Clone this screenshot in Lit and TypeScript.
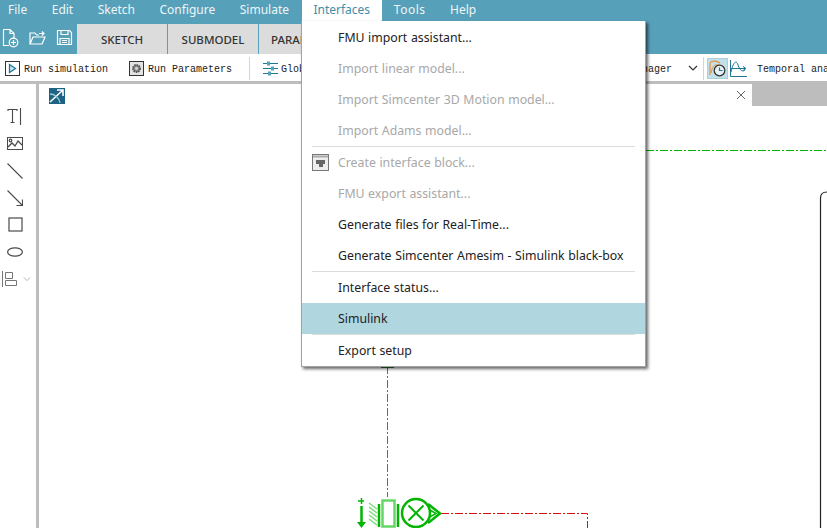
import { LitElement, html, css, svg } from "lit";
import { customElement } from "lit/decorators.js";

type Item = { t?: string; off?: boolean; hi?: boolean; sep?: boolean; icon?: boolean };

const ITEMS: Item[] = [
  { t: "FMU import assistant..." },
  { t: "Import linear model...", off: true },
  { t: "Import Simcenter 3D Motion model...", off: true },
  { t: "Import Adams model...", off: true },
  { sep: true },
  { t: "Create interface block...", off: true, icon: true },
  { t: "FMU export assistant...", off: true },
  { t: "Generate files for Real-Time..." },
  { t: "Generate Simcenter Amesim - Simulink black-box" },
  { sep: true },
  { t: "Interface status..." },
  { t: "Simulink", hi: true },
  { sep: true },
  { t: "Export setup" },
];

const MENUS = ["File", "Edit", "Sketch", "Configure", "Simulate", "Interfaces", "Tools", "Help"];

@customElement("app-root")
export class AppRoot extends LitElement {
  static styles = css`
    :host {
      display: block;
      position: relative;
      width: 827px;
      height: 528px;
      overflow: hidden;
      background: #fff;
      font-family: "Noto Sans", "Liberation Sans", sans-serif;
    }
    svg { display: block; flex: none; }
    .menubar {
      display: flex;
      height: 21px;
      background: #57a0b9;
    }
    .menubar span {
      padding: 0 12.25px;
      font-size: 12px;
      line-height: 20px;
      color: #eef6f8;
    }
    .menubar span:first-child { padding-left: 8px; }
    .menubar span:nth-child(7) { letter-spacing: 0.5px; }
    .menubar span.open {
      margin-left: 0.75px;
      padding: 0;
      width: 79.6px;
      box-sizing: border-box;
      text-align: center;
      background: #fff;
      color: #3f8ea8;
    }
    .tabrow {
      display: flex;
      height: 33px;
      background: #57a0b9;
      align-items: flex-end;
    }
    .quick {
      display: flex;
      width: 77px;
      height: 33px;
      align-items: center;
      gap: 10px;
      padding: 0 0 0 2px;
      box-sizing: border-box;
    }
    .tab {
      width: 90px;
      height: 30px;
      margin-right: 1px;
      background: #dcdcdc;
      color: #333;
      font-size: 11.5px;
      font-weight: 500;
      line-height: 31px;
      text-align: center;
      flex: none;
    }
    .tab.clipped { text-align: left; padding-left: 12px; width: 120px; box-sizing: border-box; }
    .toolbar {
      display: flex;
      height: 27px;
      padding-top: 1px;
      box-sizing: border-box;
      align-items: center;
      background: #fff;
      overflow: hidden;
      font-family: "Liberation Mono", "DejaVu Sans Mono", monospace;
      font-size: 10px;
      color: #222;
      white-space: nowrap;
    }
    .toolbar > * { flex: none; }
    .txt { padding-top: 2px; }
    .vsep { width: 1px; height: 23px; background: #d4d4d4; }
    .active {
      display: flex;
      width: 21px;
      height: 21px;
      align-items: center;
      justify-content: center;
      background: #c3dfe7;
      border: 1px solid #a9d0dc;
      box-sizing: border-box;
    }
    .work {
      display: flex;
      height: 447px;
      border-top: 3px solid #bdbdbd;
      box-sizing: border-box;
    }
    .rail {
      display: flex;
      flex-direction: column;
      align-items: flex-start;
      width: 36px;
      padding-top: 19px;
      box-sizing: border-box;
      flex: none;
    }
    .slot {
      display: flex;
      height: 27px;
      width: 30px;
      align-items: center;
      justify-content: center;
    }
    .slot.wide { width: 36px; justify-content: flex-start; gap: 6px; padding-left: 2px; box-sizing: border-box; }
    .canvas {
      position: relative;
      flex: 1;
      border-left: 3px solid #bdbdbd;
      overflow: hidden;
    }
    .doc-strip {
      display: flex;
      height: 22px;
    }
    .doc-tab {
      position: relative;
      width: 713px;
      display: flex;
      align-items: center;
      justify-content: flex-end;
      padding-right: 6px;
      box-sizing: border-box;
    }
    .doc-logo { margin-left: 10px; margin-right: auto; margin-top: 2px; }
    .doc-rest { flex: 1; background: #bdbdbd; }
    .diagram { position: absolute; left: 0; top: 0; }
    .menu {
      position: absolute;
      left: 301px;
      top: 21px;
      width: 345px;
      height: 346px;
      box-sizing: border-box;
      background: #fff;
      border: 1px solid #a2a2a2;
      border-top: 0;
      padding-top: 1px;
      box-shadow: 2px 2px 3px rgba(0, 0, 0, 0.6);
      font-size: 12.3px;
      word-spacing: 0.4px;
      color: #222;
    }
    .item {
      position: relative;
      display: flex;
      align-items: center;
      height: 31px;
      padding-left: 36px;
      white-space: nowrap;
    }
    .item.off { color: #a8a8a8; }
    .item.hi { background: #b0d6e0; }
    .item svg { position: absolute; left: 10px; top: 7px; }
    .sep {
      height: 1px;
      margin: 0 10px 0 10px;
      background: #dcdcdc;
    }
  `;

  private quick() {
    return html`
      <svg width="17" height="20" viewBox="0 0 17 20" fill="none" stroke="#fff" stroke-width="1.2">
        <path d="M1.5 1.500h6.500l4 4v5M8 1.500v4h4M7 17.500H1.500v-16" />
        <circle cx="11.500" cy="14.500" r="4.300" />
        <path d="M9 14.500h5M11.500 12v5" />
      </svg>
      <svg width="17" height="16" viewBox="0 0 17 16" fill="none" stroke="#fff" stroke-width="1.2">
        <path d="M1 14V3h5l1.500 2H10M1 14l3-7h12l-3 7z" />
        <path d="M10 3.500h5M13 1.500l2 2-2 2" />
      </svg>
      <svg width="17" height="17" viewBox="0 0 17 17" fill="none" stroke="#fff" stroke-width="1.2">
        <path d="M1.500 1.500h12l2 2v12h-14z" />
        <path d="M5 1.500v4h7v-4M4 15.500v-6h9v6M6 11.500h5M6 13.500h5" />
      </svg>
    `;
  }

  private playIcon() {
    return html`<svg width="15" height="15" viewBox="0 0 15 15" fill="none">
      <rect x="0.500" y="0.500" width="14" height="14" fill="#fff" stroke="#333" />
      <path d="M4.500 3.500l6 4-6 4z" fill="#cfe5ec" stroke="#1f7796" stroke-width="1.300" />
    </svg>`;
  }

  private gearIcon() {
    return html`<svg width="15" height="15" viewBox="0 0 15 15" fill="none">
      <rect x="0.500" y="0.500" width="14" height="14" fill="#e4e4e4" stroke="#333" />
      <circle cx="7.500" cy="7.500" r="3.500" fill="#8d8d8d" stroke="#555" stroke-width="2" stroke-dasharray="1.500 0.800" />
      <circle cx="7.500" cy="7.500" r="1.400" fill="#d8d8d8" />
    </svg>`;
  }

  private slidersIcon() {
    return html`<svg width="15" height="15" viewBox="0 0 15 15" fill="none" stroke="#1f7796">
      <path d="M0 2.500h15M0 7.500h15M0 12.500h15" />
      <rect x="4" y="0.500" width="3" height="4" fill="#57a0b9" stroke="none" />
      <rect x="8" y="5.500" width="3" height="4" fill="#57a0b9" stroke="none" />
      <rect x="5" y="10.500" width="3" height="4" fill="#57a0b9" stroke="none" />
    </svg>`;
  }

  private chevron(color: string, w = 10) {
    return html`<svg width=${w} height="6" viewBox="0 0 10 6" fill="none" stroke=${color} stroke-width="1.200">
      <path d="M1 1l4 4 4-4" />
    </svg>`;
  }

  private rail() {
    const s = "#4a4a4a";
    return html`
      <div class="slot"><svg width="16" height="17" viewBox="0 0 16 17" fill="none" stroke=${s} stroke-width="1.100">
        <path d="M1 3V1.500h9V3M5.500 1.500v13M3.500 14.500h4M13.500 0v17" />
      </svg></div>
      <div class="slot"><svg width="16" height="13" viewBox="0 0 16 13" fill="none" stroke=${s}>
        <rect x="0.500" y="0.500" width="15" height="12" />
        <circle cx="3.500" cy="3.500" r="1.300" stroke-width="1.200" />
        <path d="M1 10l4-4 3 3 3-5 4 4" stroke-width="1.300" />
      </svg></div>
      <div class="slot"><svg width="16" height="16" viewBox="0 0 16 16" fill="none" stroke=${s} stroke-width="1.100">
        <path d="M0.500 0.500l15 15" />
      </svg></div>
      <div class="slot"><svg width="16" height="16" viewBox="0 0 16 16" fill="none" stroke=${s} stroke-width="1.100">
        <path d="M0.500 0.500l15 15M15.500 9.500v6h-6" />
      </svg></div>
      <div class="slot"><svg width="15" height="15" viewBox="0 0 15 15" fill="none" stroke=${s} stroke-width="1.200">
        <rect x="1" y="1" width="13" height="13" />
      </svg></div>
      <div class="slot"><svg width="16" height="10" viewBox="0 0 16 10" fill="none" stroke=${s} stroke-width="1.200">
        <ellipse cx="8" cy="5" rx="7.400" ry="4.200" />
      </svg></div>
      <div class="slot wide">
        <svg width="15" height="16" viewBox="0 0 15 16" fill="none" stroke="#777">
          <path d="M0.500 0v16M3.500 1.500h7v6h-7zM3.500 9.500h11v5h-11z" />
        </svg>
        ${this.chevron("#b0b0b0", 8)}
      </div>
    `;
  }

  private diagram() {
    const g = "#00b400";
    // Coordinates are page-based; the group moves them into the canvas.
    return svg`
      <g transform="translate(-39 -84)" fill="none">
        <path d="M646 150.500H827" stroke=${g} stroke-width="1" stroke-dasharray="8 2 2 2" />
        <path d="M827 192c-4 0-6.500 2-6.500 6V528" stroke="#222" stroke-width="1.200" />
        <path d="M387.500 366V497" stroke=${g} stroke-width="1" stroke-dasharray="8 2 2 2" />
        <path d="M381 367.500h13" stroke="#2f7a2f" stroke-width="1" />
        <path d="M441 513.500H587.500V528" stroke="#d81010" stroke-width="1" stroke-dasharray="8 2 2 2" />
        <path d="M358 501h6M361.500 498v6" stroke=${g} stroke-width="1.500" />
        <path d="M361.500 506V523" stroke=${g} stroke-width="2.500" />
        <path d="M357 522h9l-4.500 6z" fill=${g} />
        <path d="M369 507l8 6M369 511l8 6M369 515l8 6M369 519l8 6M369 503l8 6" stroke="#7ddc7d" stroke-width="1.500" />
        <path d="M379 504v23" stroke=${g} stroke-width="2.500" />
        <rect x="382.500" y="500.500" width="12" height="26" stroke="#66d666" stroke-width="2.500" />
        <path d="M398 504v23" stroke=${g} stroke-width="2.500" />
        <circle cx="416" cy="513" r="14" stroke=${g} stroke-width="2.500" />
        <path d="M408.500 505.500l15 15M423.500 505.500l-15 15" stroke=${g} stroke-width="2" />
        <path d="M428 504l12 9.500-12 9.500" stroke=${g} stroke-width="2.500" />
        <path d="M430 510l6 3.500-6 3.500z" stroke=${g} stroke-width="1.500" />
      </g>
    `;
  }

  render() {
    return html`
      <div class="menubar">
        ${MENUS.map((m) => html`<span class=${m === "Interfaces" ? "open" : ""}>${m}</span>`)}
      </div>
      <div class="tabrow">
        <div class="quick">${this.quick()}</div>
        <div class="tab">SKETCH</div>
        <div class="tab">SUBMODEL</div>
        <div class="tab clipped">PARAMETERS</div>
      </div>
      <div class="toolbar">
        <span style="margin-left:5px;margin-right:4px">${this.playIcon()}</span>
        <span class="txt">Run simulation</span>
        <span style="margin-left:21px;margin-right:4px">${this.gearIcon()}</span>
        <span class="txt">Run Parameters</span>
        <span class="vsep" style="margin-left:17px"></span>
        <span style="margin-left:13px;margin-right:3px">${this.slidersIcon()}</span>
        <span class="txt">Global</span>
        <span class="txt" style="margin-left:313px">Manager</span>
        <span style="margin-left:16px">${this.chevron("#333")}</span>
        <span class="vsep" style="margin-left:5px"></span>
        <span class="active" style="margin-left:3px">
          <svg width="17" height="17" viewBox="0 0 17 17" fill="none">
            <path d="M1 15V3M1 3c1-2 6-3 10 0" stroke="#e8923a" stroke-width="1.200" />
            <path d="M2 13c1-6 3-9 8-8" stroke="#e8923a" />
            <circle cx="10.500" cy="10.500" r="5.300" fill="#e6f1f4" stroke="#333" stroke-width="1.300" />
            <path d="M10.500 7.500v3h3" stroke="#1f7796" stroke-width="1.200" />
          </svg>
        </span>
        <span style="margin-left:2px">
          <svg width="17" height="17" viewBox="0 0 17 17" fill="none" stroke="#1f7796">
            <path d="M0.500 0v16.500H17" />
            <path d="M1 12C3 3 6-1 8 5s5 7 7 5" />
            <path d="M1 8.500h14M13 6.500l3 2-3 2" />
          </svg>
        </span>
        <span class="txt" style="margin-left:10px">Temporal analysis</span>
      </div>
      <div class="work">
        <div class="rail">${this.rail()}</div>
        <div class="canvas">
          <svg class="diagram" width="788" height="444">${this.diagram()}</svg>
          <div class="doc-strip">
            <div class="doc-tab">
              <svg class="doc-logo" width="16" height="16" viewBox="0 0 16 16" fill="none">
                <rect width="16" height="16" fill="#1c6384" />
                <path d="M1 14L14 2M8 2h6v6" stroke="#fff" stroke-width="1.600" />
                <path d="M1 6c4 0 9 3 10 9" stroke="#9cc9d8" stroke-width="1.300" />
              </svg>
              <svg width="10" height="10" viewBox="0 0 10 10" fill="none" stroke="#666">
                <path d="M1 1l8 8M9 1l-8 8" />
              </svg>
            </div>
            <div class="doc-rest"></div>
          </div>
        </div>
      </div>
      <div class="menu">
        ${ITEMS.map((i) =>
          i.sep
            ? html`<div class="sep"></div>`
            : html`<div class="item ${i.off ? "off" : ""} ${i.hi ? "hi" : ""}">
                ${i.icon
                  ? html`<svg width="17" height="17" viewBox="0 0 17 17" fill="none">
                      <rect x="0.500" y="0.500" width="16" height="16" fill="#eee" stroke="#777" />
                      <path d="M1 2.500h15" stroke="#aaa" stroke-width="2" />
                      <path d="M4 6h9v4h-2v3H7v-3H4z" fill="#666" />
                    </svg>`
                  : ""}
                ${i.t}
              </div>`
        )}
      </div>
    `;
  }
}
